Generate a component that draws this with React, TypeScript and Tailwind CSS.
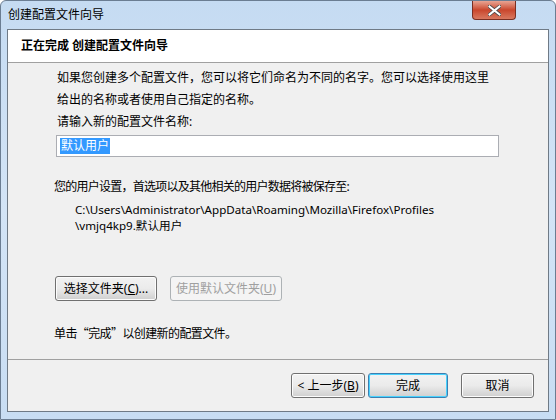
import React from 'react';

const font = { fontFamily: '"Noto Sans", "Noto Sans CJK SC", sans-serif' };
const cjk = { fontFamily: '"Noto Sans CJK SC", "Noto Sans", sans-serif' };

function WinButton({
    children,
    disabled,
    primary,
    className = '',
}: {
    children: React.ReactNode;
    disabled?: boolean;
    primary?: boolean;
    className?: string;
}) {
    const base = 'h-[25px] rounded-[3px] text-[12px] flex items-center justify-center leading-none';
    if (disabled) {
        return (
            <button className={`${base} border border-[#adb2b5] bg-[#f4f4f4] text-[#a0a0a0] ${className}`}>
                {children}
            </button>
        );
    }
    return (
        <button
            className={`${base} border ${primary ? 'border-[#3c7fb1] shadow-[inset_0_0_0_1px_#48d2fe]' : 'border-[#707070] shadow-[inset_0_0_0_1px_#fcfcfc]'} bg-gradient-to-b from-[#f2f2f2] via-[#ebebeb] to-[#cfcfcf] text-black ${className}`}
        >
            {children}
        </button>
    );
}

export default function App() {
    return (
        <div
            className="w-[556px] h-[420px] flex flex-col overflow-hidden rounded-t-[6px] border border-[#6b7d92] bg-gradient-to-b from-[#c5dbf2] via-[#d3e4f6] to-[#c8ddf3]"
            style={font}
        >
            {/* title bar */}
            <div className="h-[28px] flex shrink-0">
                <div className="pl-[7px] pt-[5px] text-[12px] text-black">创建配置文件向导</div>
                <div className="flex-1" />
                <div className="mr-[39px] w-[44px] h-[19px] rounded-b-[4px] border border-t-0 border-[#7a2f22] bg-gradient-to-b from-[#e8a493] via-[#c9462c] to-[#d8785f] flex items-center justify-center">
                    <svg width="13" height="11" viewBox="0 0 13 11">
                        <path d="M1.5 1.5 L11.5 9.5 M11.5 1.5 L1.5 9.5" stroke="#4a4a4a" strokeWidth="3.6" strokeLinecap="square" />
                        <path d="M1.5 1.5 L11.5 9.5 M11.5 1.5 L1.5 9.5" stroke="#ffffff" strokeWidth="2" strokeLinecap="square" />
                    </svg>
                </div>
            </div>

            {/* client area */}
            <div className="mx-[6px] mb-[7px] flex-1 flex flex-col border border-[#6f7a86] bg-[#f0f0f0]">
                <div className="h-[33px] shrink-0 bg-white border-b border-[#a0a0a0] flex items-center pl-[13px]">
                    <span className="text-[12px] font-bold text-black">正在完成 创建配置文件向导</span>
                </div>

                <div className="flex-1 pl-[49px] pr-[48px] pt-[7px] text-[12px] text-black leading-[16px]">
                    <p>如果您创建多个配置文件，您可以将它们命名为不同的名字。您可以选择使用这里</p>
                    <p className="mt-[6px]">给出的名称或者使用自己指定的名称。</p>
                    <p className="mt-[6px]">请输入新的配置文件名称:</p>
                    <div className="mt-[5px] -ml-[1px] h-[22px] w-[443px] border border-[#abadb3] bg-white flex items-center px-[3px]">
                        <span className="bg-[#3399ff] text-white px-[1px] leading-[16px]">默认用户</span>
                    </div>

                    <p className="mt-[22px] -ml-[3px] tracking-[-0.75px]">您的用户设置，首选项以及其他相关的用户数据将被保存至:</p>
                    <div className="pl-[18px] mt-[7px] text-[11.6px]">
                        <p>C:\Users\Administrator\AppData\Roaming\Mozilla\Firefox\Profiles</p>
                        <p>\vmjq4kp9.默认用户</p>
                    </div>

                    <div className="mt-[42px] -ml-[2px] flex gap-[13px]">
                        <WinButton className="w-[102px]">
                            选择文件夹(<span className="underline">C</span>)...
                        </WinButton>
                        <WinButton disabled className="w-[112px]">
                            使用默认文件夹(<span className="underline">U</span>)
                        </WinButton>
                    </div>

                    <p className="mt-[24px] -ml-[3px] tracking-[-0.6px]" style={cjk}>
                        单击“完成”以创建新的配置文件。
                    </p>
                </div>

                <div className="h-[52px] shrink-0 border-t border-[#a0a0a0] flex items-start justify-end pt-[13px] pr-[14px]">
                    <WinButton className="w-[74px]">
                        &lt; 上一步(<span className="underline">B</span>)
                    </WinButton>
                    <WinButton primary className="w-[80px] ml-[3px]">
                        完成
                    </WinButton>
                    <WinButton className="w-[73px] ml-[13px]">
                        取消
                    </WinButton>
                </div>
            </div>
        </div>
    );
}
